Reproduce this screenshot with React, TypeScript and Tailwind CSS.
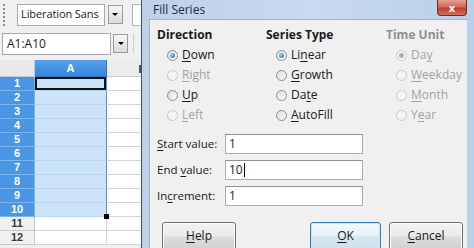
import React from "react";

const ui = "font-['Open_Sans',sans-serif]";

function Radio({ checked = false, disabled = false }: { checked?: boolean; disabled?: boolean }) {
  return (
    <span
      className={`flex h-[11px] w-[11px] shrink-0 items-center justify-center rounded-full border ${
        disabled
          ? "border-[#c9c9c9] bg-[#f5f5f5]"
          : "border-[#8a8c8f] bg-[linear-gradient(135deg,#dcdcdc,#fdfdfd)]"
      }`}
    >
      {checked && (
        <span
          className={`h-[5px] w-[5px] rounded-full ${
            disabled ? "bg-[#b0b0b0]" : "bg-[radial-gradient(circle_at_35%_35%,#9fd4f5,#1b64ad)]"
          }`}
        />
      )}
    </span>
  );
}

function Option({
  children,
  checked,
  disabled,
}: {
  children: React.ReactNode;
  checked?: boolean;
  disabled?: boolean;
}) {
  return (
    <div className={`flex h-[20px] items-center gap-[4px] pl-[10px] ${disabled ? "text-[#a3a3a3]" : "text-[#1a1a1a]"}`}>
      <Radio checked={checked} disabled={disabled} />
      <span>{children}</span>
    </div>
  );
}

function Field({ label, value, caret }: { label: React.ReactNode; value: string; caret?: boolean }) {
  return (
    <div className="flex h-[20px] items-center">
      <span className="w-[68px] text-[11.5px] text-[#1a1a1a]">{label}</span>
      <div className="flex h-[20px] w-[138px] items-center border border-[#abadb3] border-t-[#8e9196] bg-white pl-[3px] text-[#1a1a1a]">
        {value}
        {caret && <span className="ml-px h-[14px] w-px bg-black" />}
      </div>
    </div>
  );
}

function Button({ children, primary }: { children: React.ReactNode; primary?: boolean }) {
  return (
    <div
      className={`flex h-[30px] items-start justify-center rounded-[3px] border pt-[4px] text-[#1a1a1a] ${
        primary
          ? "w-[71px] border-[#3c7fb1] bg-[linear-gradient(#f4f9fc,#e6f1f8_45%,#d6e6f1_50%,#cfdfea)] shadow-[inset_0_0_0_1px_#bfe6f8]"
          : "w-[74px] border-[#707070] bg-[linear-gradient(#f2f2f2,#ebebeb_45%,#dddddd_50%,#cfcfcf)] shadow-[inset_0_0_0_1px_#fcfcfc]"
      }`}
    >
      {children}
    </div>
  );
}

function DropButton({ className = "" }: { className?: string }) {
  return (
    <div
      className={`flex h-[19px] w-[15px] items-center justify-center border border-[#9c9c9c] bg-[linear-gradient(#f6f6f6,#dcdcdc)] ${className}`}
    >
      <span className="h-0 w-0 border-x-[3px] border-t-[3px] border-x-transparent border-t-black" />
    </div>
  );
}

function Sheet() {
  const rows = Array.from({ length: 12 }, (_, i) => i + 1);
  return (
    <div className="flex h-[248px] w-[141px] shrink-0 flex-col bg-[#f0f0f0] font-['Liberation_Sans',sans-serif]">
      <div className="flex h-[29px] items-center">
        <div className="ml-[3px] h-[22px] border-l-2 border-dotted border-[#8d8d8d]" />
        <div
          className={`ml-[12px] flex h-[22px] w-[93px] items-center overflow-hidden whitespace-nowrap border border-[#a9a9a9] bg-white pl-[3px] text-[11px] tracking-[-0.1px] text-[#1a1a1a] ${ui}`}
        >
          Liberation Sans
        </div>
        <DropButton className="ml-[3px]" />
        <div className="ml-[9px] h-[22px] w-[10px] border border-r-0 border-[#b5b5b5] bg-white" />
      </div>
      <div className="flex h-[29px] items-center">
        <div
          className={`ml-[2px] flex h-[22px] w-[109px] items-center whitespace-nowrap border border-[#a9a9a9] bg-white pl-[4px] text-[12px] text-[#1a1a1a] ${ui}`}
        >
          A1:A10
        </div>
        <DropButton className="ml-[2px]" />
        <div className="ml-[5px] h-[19px] w-px bg-[#cfcfcf]" />
      </div>
      <div className="h-[2px]" />
      <div className="flex h-[17px]">
        <div className="w-[35px] border-r border-b border-[#c8c8c8] bg-[#e9e9e9]" />
        <div className="flex w-[72px] items-center justify-center border-r border-b border-[#2e78c9] bg-[linear-gradient(#5aa2ec,#3585da)] text-[11px] font-bold text-white">
          A
        </div>
        <div className="relative w-[34px] border-b border-[#c8c8c8] bg-[#ececec]">
          <span className="absolute top-[5px] right-0 h-[8px] w-[2px] bg-[#555]" />
        </div>
      </div>
      {rows.map((n) => {
        const sel = n <= 10;
        return (
          <div key={n} className="flex h-[14px] shrink-0">
            <div
              className={`flex w-[35px] items-center justify-center border-r border-b text-[11px] font-bold leading-none ${
                sel ? "border-[#7db4ec] bg-[#4a96e4] text-white" : "border-[#c9c9c9] bg-[#f0f0f0] text-[#3a3a3a]"
              }`}
            >
              {n}
            </div>
            <div
              className={`relative w-[72px] border-r border-b ${
                sel ? "border-r-[#4f93dc] border-b-[#b9d6f2] bg-[#cde4f8]" : "border-[#d5d5d5] bg-white"
              } ${n === 1 ? "shadow-[inset_0_0_0_2px_#111]" : ""}`}
            >
              {n === 10 && <span className="absolute -right-[3px] -bottom-[3px] z-10 h-[5px] w-[5px] bg-black" />}
            </div>
            <div className="w-[34px] border-b border-[#d5d5d5] bg-white" />
          </div>
        );
      })}
    </div>
  );
}

export default function App() {
  return (
    <div className={`flex h-[248px] w-[474px] overflow-hidden bg-white text-[12px] ${ui}`}>
      <Sheet />
      <div className="w-px shrink-0 bg-[#4b4f55]" />
      <div className="flex h-[248px] flex-1 flex-col bg-[linear-gradient(90deg,#bcd0e8,#c8daef_50%,#bad0ea)]">
        <div className="flex h-[19px] shrink-0 items-start">
          <span className="ml-[11px] mt-[1px] text-[12px] text-[#1f2a38]">Fill Series</span>
          <div className="ml-auto mr-[7px] flex h-[16px] w-[30px] items-center justify-center rounded-b-[4px] border border-t-0 border-[#7a2a22] bg-[linear-gradient(#e7a08f,#d26a56_45%,#c0402c_55%,#d0705a)] text-[11px] font-bold leading-none text-white">
            x
          </div>
        </div>
        <div className="flex flex-1 px-[7px]">
          <div className="flex flex-1 flex-col border-t border-l border-[#9fb4cc] bg-[#f0f0f0] pl-[7px] pt-[7px]">
            <div className="flex">
              <div className="w-[109px]">
                <div className="h-[16px] font-bold leading-[16px] text-[#1a1a1a]">Direction</div>
                <div className="mt-[2px]">
                  <Option checked>
                    <u className="underline-offset-2">D</u>own
                  </Option>
                  <Option disabled>
                    <u className="underline-offset-2">R</u>ight
                  </Option>
                  <Option>
                    <u className="underline-offset-2">U</u>p
                  </Option>
                  <Option disabled>
                    <u className="underline-offset-2">L</u>eft
                  </Option>
                </div>
              </div>
              <div className="w-[120px]">
                <div className="h-[16px] font-bold leading-[16px] text-[#1a1a1a]">Series Type</div>
                <div className="mt-[2px]">
                  <Option checked>
                    Li<u className="underline-offset-2">n</u>ear
                  </Option>
                  <Option>
                    <u className="underline-offset-2">G</u>rowth
                  </Option>
                  <Option>
                    Da<u className="underline-offset-2">t</u>e
                  </Option>
                  <Option>
                    <u className="underline-offset-2">A</u>utoFill
                  </Option>
                </div>
              </div>
              <div className="flex-1">
                <div className="h-[16px] font-bold leading-[16px] text-[#8f8f8f]">Time Unit</div>
                <div className="mt-[2px]">
                  <Option checked disabled>
                    Da<u className="underline-offset-2">y</u>
                  </Option>
                  <Option disabled>
                    <u className="underline-offset-2">W</u>eekday
                  </Option>
                  <Option disabled>
                    <u className="underline-offset-2">M</u>onth
                  </Option>
                  <Option disabled>
                    Y<u className="underline-offset-2">e</u>ar
                  </Option>
                </div>
              </div>
            </div>
            <div className="mt-[9px] flex flex-col gap-[6px]">
              <Field
                label={
                  <>
                    <u className="underline-offset-2">S</u>tart value:
                  </>
                }
                value="1"
              />
              <Field
                label={
                  <>
                    End <u className="underline-offset-2">v</u>alue:
                  </>
                }
                value="10"
                caret
              />
              <Field
                label={
                  <>
                    In<u className="underline-offset-2">c</u>rement:
                  </>
                }
                value="1"
              />
            </div>
            <div className="mt-[16px] flex gap-[8px] pl-[5px]">
              <Button>
                <u className="underline-offset-2">H</u>elp
              </Button>
              <div className="w-[58px]" />
              <Button primary>
                <u className="underline-offset-2">O</u>K
              </Button>
              <Button>
                <u className="underline-offset-2">C</u>ancel
              </Button>
            </div>
          </div>
        </div>
      </div>
    </div>
  );
}
